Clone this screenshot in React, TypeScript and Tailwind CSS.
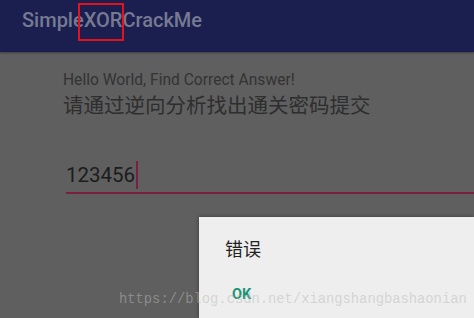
import React from "react";

export default function App() {
  return (
    <div
      className="relative w-[474px] h-[318px] overflow-hidden bg-[#5f5f5f]"
      style={{ fontFamily: "Roboto, 'Noto Sans CJK SC', sans-serif" }}
    >
      <div className="relative h-[52px] bg-[#1b1f50] flex items-start pt-[10px] pl-[22px] shadow-[0_1px_2px_rgba(0,0,0,0.35)]">
        <span className="text-[20px] font-medium text-[#767a90] leading-[20px]">
          SimpleXORCrackMe
        </span>
        <div className="absolute left-[78px] top-[3px] w-[46px] h-[38px] border-2 border-[#e3121c]" />
      </div>

      <div className="flex flex-col pl-[63px] pt-[19px]">
        <div className="text-[15.6px] text-[#333333] leading-[18px]">
          Hello World, Find Correct Answer!
        </div>
        <div className="mt-[3px] text-[20.5px] text-[#2e2e2e] leading-[24px]" style={{ fontFamily: "'Noto Sans CJK SC', sans-serif" }}>
          请通过逆向分析找出通关密码提交
        </div>
        <div className="mt-[45px] ml-[3px] flex flex-col">
          <div className="flex items-center h-[28px]">
            <span className="text-[20.5px] text-[#1c1c1c] leading-none">123456</span>
            <span className="ml-[1px] w-[2px] h-[28px] bg-[#7a1f40]" />
          </div>
          <div className="mt-[3px] h-[2px] bg-[#7b1f3e]" />
        </div>
      </div>

      <div className="absolute left-[199px] top-[217px] right-0 bottom-0 bg-[#eeeeee] shadow-[0_0_4px_rgba(0,0,0,0.4)] flex flex-col pl-[26px] pt-[20px]">
        <div className="text-[18px] text-[#222222] leading-[22px]" style={{ fontFamily: "'Noto Sans CJK SC', sans-serif" }}>
          错误
        </div>
        <div className="mt-[29px] ml-[7px] text-[14.5px] font-bold text-[#1f9477] leading-none">
          OK
        </div>
      </div>

      <div
        className="absolute left-[119px] top-[292px] text-[13.8px] leading-[16px] text-[rgba(185,185,185,0.5)] whitespace-nowrap"
        style={{ fontFamily: "'Liberation Mono', 'DejaVu Sans Mono', monospace" }}
      >
        https://blog.csdn.net/xiangshangbashaonian
      </div>
    </div>
  );
}
